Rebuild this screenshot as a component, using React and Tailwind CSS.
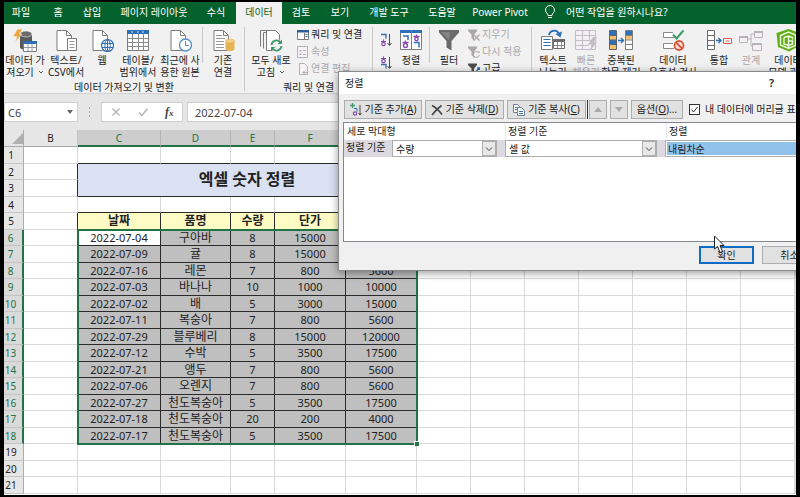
import { useState } from 'react'
import clsx from 'clsx'

const TABS = [
  { label: '파일', width: 'w-[34px]' },
  { label: '홈', width: 'w-[40px]' },
  { label: '삽입', width: 'w-[28px]' },
  { label: '페이지 레이아웃', width: 'w-[96px]' },
  { label: '수식', width: 'w-[28px]' },
  { label: '데이터', width: 'ml-[6px] w-[46px]' },
  { label: '검토', width: 'w-[38px]' },
  { label: '보기', width: 'w-[40px]' },
  { label: '개발 도구', width: 'w-[58px]' },
  { label: '도움말', width: 'w-[48px]' },
  { label: 'Power Pivot', width: 'w-[68px]' },
]

// 날짜, 품명, 수량, 단가, 금액
const ITEMS = [
  ['2022-07-04', '구아바', 8, 15000, 120000],
  ['2022-07-09', '귤', 8, 15000, 120000],
  ['2022-07-16', '레몬', 7, 800, 5600],
  ['2022-07-03', '바나나', 10, 1000, 10000],
  ['2022-07-02', '배', 5, 3000, 15000],
  ['2022-07-11', '복숭아', 7, 800, 5600],
  ['2022-07-29', '블루베리', 8, 15000, 120000],
  ['2022-07-12', '수박', 5, 3500, 17500],
  ['2022-07-21', '앵두', 7, 800, 5600],
  ['2022-07-06', '오렌지', 7, 800, 5600],
  ['2022-07-27', '천도복숭아', 5, 3500, 17500],
  ['2022-07-18', '천도복숭아', 20, 200, 4000],
  ['2022-07-17', '천도복숭아', 5, 3500, 17500],
]

const COLUMNS = ['B', 'C', 'D', 'E', 'F', 'G', 'H', 'I', 'J', 'K', 'L', 'M', 'N']
const SELECTED_COLUMNS = ['C', 'D', 'E', 'F', 'G']
const FIRST_ROW = 6

/* ---------- ribbon icons ---------- */

function Icon({ children, w = 24, h = 24, className }) {
  return (
    <svg width={w} height={h} viewBox={`0 0 ${w} ${h}`} fill="none" className={clsx('shrink-0', className)} aria-hidden="true">
      {children}
    </svg>
  )
}

function Page({ x = 3 }) {
  return (
    <>
      <path d={`M${x} 2.5h9.500l5 5v15h-14.500z`} fill="#fff" stroke="#7d7d7d" />
      <path d={`M${x + 9.5} 2.500v5h5`} stroke="#7d7d7d" />
    </>
  )
}

function GetDataIcon() {
  return (
    <Icon>
      <path d="M7 7v12c0 2 3 3 6 3s6-1 6-3V7z" fill="#595959" />
      <ellipse cx="13" cy="6" rx="6" ry="3" fill="#6b6b6b" stroke="#f1f1f1" strokeWidth=".6" />
      <path d="M4.500 1h5L6.500 6H9L2 14.500 4 8.500H0z" fill="#eda33b" stroke="#f1f1f1" strokeWidth=".6" />
      <path d="M10.500 13.500h13v10h-13z" fill="#fff" stroke="#7d7d7d" />
      <path d="M10 13h14v3H10z" fill="#2f6fb5" />
      <path d="M11 19.500h12M15 16v7M19 16v7" stroke="#9a9a9a" />
    </Icon>
  )
}

function TextFileIcon() {
  return (
    <Icon>
      <Page />
      <path d="M13.500 10.500h9v12h-9z" fill="#fff" stroke="#7d7d7d" />
      <path d="M15.500 13.500h5M15.500 16.500h5M15.500 19.500h5" stroke="#9a9a9a" />
    </Icon>
  )
}

function WebIcon() {
  return (
    <Icon>
      <Page />
      <circle cx="17.500" cy="17.500" r="6" fill="#fff" stroke="#2f6fb5" strokeWidth="1.200" />
      <ellipse cx="17.500" cy="17.500" rx="2.600" ry="6" stroke="#2f6fb5" />
      <path d="M12 15.500h11M12 19.500h11M17.500 12v11" stroke="#2f6fb5" />
    </Icon>
  )
}

function TableIcon() {
  return (
    <Icon>
      <path d="M1.500 2.500h21v20h-21z" fill="#fff" stroke="#7d7d7d" />
      <path d="M1 2h22v4H1z" fill="#2f6fb5" />
      <path d="M2 10.500h20M2 14.500h20M2 18.500h20M6.500 6v16M12.500 6v16M17.500 6v16" stroke="#8a8a8a" />
      <path d="M6 3v2M12 3v2M17 3v2" stroke="#d8e6f4" />
    </Icon>
  )
}

function RecentIcon() {
  return (
    <Icon>
      <Page />
      <circle cx="17.500" cy="17" r="6" fill="#fff" stroke="#5a8fc4" strokeWidth="1.300" />
      <path d="M17.500 13v4.500H21" stroke="#5a8fc4" />
    </Icon>
  )
}

function ConnectionIcon() {
  return (
    <Icon>
      <Page />
      <path d="M5 7.500h6M5 10.500h9M5 13.500h8M5 16.500h8M5 19.500h8" stroke="#9a9a9a" />
      <path d="M14.500 13v8c0 1.500 2 2 4.500 2s4.500-.5 4.500-2v-8z" fill="#e6b455" />
      <ellipse cx="19" cy="13" rx="4.500" ry="1.900" fill="#f3d08b" stroke="#e6b455" strokeWidth=".6" />
    </Icon>
  )
}

function RefreshIcon() {
  return (
    <Icon>
      <path d="M1.500 18.500v-16h7M4.500 20.500v-16h4" stroke="#7d7d7d" />
      <path d="M7.500 2.500h9l4 4v16h-13z" fill="#fff" stroke="#7d7d7d" />
      <circle cx="17.500" cy="17.500" r="6.500" fill="#f1f1f1" />
      <path d="M12.500 17a5 5 0 0 1 9-2.500M22.500 18a5 5 0 0 1-9 2.500" stroke="#3f9c6b" strokeWidth="1.800" />
      <path d="M23 11.500v4.500h-4.500zM12 23.500V19h4.500z" fill="#3f9c6b" />
    </Icon>
  )
}

function QueryPaneIcon() {
  return (
    <Icon w={12} h={12}>
      <path d="M.5 1.500h11v9H.5z" fill="#fff" stroke="#7d7d7d" />
      <path d="M0 1h12v2.500H0z" fill="#2f5f96" />
      <path d="M7.500 4v6" stroke="#7d7d7d" />
      <path d="M8.500 5.500h2M8.500 7.500h2" stroke="#2f6fb5" />
    </Icon>
  )
}

function PropertiesIcon() {
  return (
    <Icon w={12} h={12}>
      <path d="M.5.500h10v11H.5z" fill="#f6f2f6" stroke="#b5b0b5" />
      <path d="M2.500 4h2v1.500h-2zM2.500 7.500h2V9h-2z" fill="#b5a8b8" />
      <path d="M6 4.500h3M6 8.500h3" stroke="#b5a8b8" />
    </Icon>
  )
}

function EditLinksIcon() {
  return (
    <Icon w={12} h={12}>
      <path d="M2.500.500h5l3 3v8h-8z" fill="#f6f2f6" stroke="#b5b0b5" />
      <path d="M6 9.500h5M8 7.500l-2 2 2 2" stroke="#b5a8b8" />
    </Icon>
  )
}

function SortOrderIcon({ descending }) {
  return (
    <Icon w={12} h={14}>
      {descending ? (
        <>
          <circle cx="3.500" cy="5" r="1.700" stroke="#8a4bb0" strokeWidth="1.200" />
          <path d="M1 2.500h5M3.500.5v2" stroke="#8a4bb0" strokeWidth="1.200" />
          <path d="M1 8.500h5v4" stroke="#2f6fb5" strokeWidth="1.300" />
        </>
      ) : (
        <>
          <path d="M1 1.500h5v4" stroke="#2f6fb5" strokeWidth="1.300" />
          <circle cx="3.500" cy="11" r="1.700" stroke="#8a4bb0" strokeWidth="1.200" />
          <path d="M1 8.500h5M3.500 6.500v2" stroke="#8a4bb0" strokeWidth="1.200" />
        </>
      )}
      <path d="M9.500 1v11M7.500 10l2 2.500 2-2.500" stroke="#4a4a4a" />
    </Icon>
  )
}

function SortIcon() {
  return (
    <Icon>
      <path d="M1.500 2.500h21v19h-21z" fill="#fff" stroke="#7d7d7d" />
      <path d="M1 2h22v3H1z" fill="#2f6fb5" />
      <path d="M12.500 2v19" stroke="#7d7d7d" />
      <path d="M4 8h5v4M15 14.500h5v5" stroke="#2f6fb5" strokeWidth="1.500" />
      <circle cx="6.500" cy="17.500" r="2" stroke="#8a4bb0" strokeWidth="1.400" />
      <path d="M3.500 14.500h6M6.500 12.500v2" stroke="#8a4bb0" strokeWidth="1.300" />
      <circle cx="17.500" cy="11" r="1.700" stroke="#8a4bb0" strokeWidth="1.400" />
      <path d="M14.500 8.500h6M17.500 6.500v2" stroke="#8a4bb0" strokeWidth="1.300" />
    </Icon>
  )
}

function FilterIcon() {
  return (
    <Icon>
      <path d="M2 2h20v2.500L14.500 13v9.500l-5-3V13L2 4.500z" fill="#6a6a6a" />
      <path d="M4 4h9l-1 8z" fill="#838383" />
    </Icon>
  )
}

function SmallFilterIcon({ kind }) {
  const active = kind === 'advanced'
  return (
    <Icon w={12} h={12}>
      <path d="M0 .5h9v1.500L6 5.500V11L3.500 9.500v-4L0 2z" fill={active ? '#4d4d4d' : '#aaa6aa'} />
      {kind === 'clear' && <path d="M5.500 5.500l6 6M11.500 5.500l-6 6" stroke="#aaa6aa" strokeWidth="1.300" />}
      {kind === 'reapply' && <path d="M5.500 8a3 3 0 0 1 5.500-1v-2M11.500 9a3 3 0 0 1-5.500 1v2" stroke="#aaa6aa" />}
      {active && <path d="M8 9l3-4M9 5h2.500v2" stroke="#2f6fb5" strokeWidth="1.300" />}
    </Icon>
  )
}

function TextToColumnsIcon() {
  return (
    <Icon>
      <path d="M8 7c1-5 8-6 10-1" stroke="#2f6fb5" strokeWidth="1.800" />
      <path d="M21 3.500l-1.500 6L14.500 6z" fill="#2f6fb5" />
      <path d="M.5 8.500h11v13H.5z" fill="#fff" stroke="#7d7d7d" />
      <path d="M2.500 11.500h7M2.500 14.500h7M2.500 17.500h7" stroke="#2f6fb5" />
      <path d="M12.500 11.500h11v9h-11z" fill="#fff" stroke="#6b6b6b" />
      <path d="M12 11h12v3H12z" fill="#6b6b6b" />
      <path d="M13 17.500h10M16.500 14v6M20.500 14v6" stroke="#8a8a8a" />
    </Icon>
  )
}

function FlashFillIcon() {
  return (
    <Icon>
      <path d="M1.500 2.500h20v19h-20z" fill="#f4eff5" stroke="#c3bdc5" />
      <path d="M1 7.500h21M1 12.500h21M1 17.500h14M8.500 3v18M15.500 3v10" stroke="#c3bdc5" />
      <path d="M19 9h4l-3 5h3l-7 9 1.500-6.500H14z" fill="#c3bdc5" />
    </Icon>
  )
}

function DuplicatesIcon() {
  return (
    <Icon>
      <path d="M.5 2.500h7v19h-7z" fill="#f0c06a" stroke="#5a6470" />
      <path d="M1 3h6v4H1zM1 12h6v4H1z" fill="#2f6fb5" />
      <path d="M1 7.500h6M1 12h6M1 16.500h6" stroke="#5a6470" />
      <path d="M16.500 2.500h7v19h-7z" fill="#fff" stroke="#7d7d7d" />
      <path d="M17 3h6v4h-6z" fill="#2f6fb5" />
      <path d="M17 7.500h6v4h-6z" fill="#f0c06a" />
      <path d="M17 7.500h6M17 12h6M17 16.500h6" stroke="#7d7d7d" />
      <path d="M9 12.500h5M12 10l2.500 2.500L12 15" stroke="#2f6fb5" strokeWidth="1.400" />
    </Icon>
  )
}

function ValidationIcon() {
  return (
    <Icon>
      <path d="M12 4.500H2.500v5H14M12 15.500H2.500v5H13" fill="#fff" stroke="#8a8a8a" />
      <path d="M12 6.500l3.500 4 7-8" stroke="#3f9c6b" strokeWidth="2" />
      <circle cx="18" cy="17.500" r="4.500" fill="#fbe3dc" stroke="#d9573a" strokeWidth="1.800" />
      <path d="M15 14.500l6 6" stroke="#d9573a" strokeWidth="1.800" />
    </Icon>
  )
}

function ConsolidateIcon() {
  return (
    <Icon w={26}>
      <path d="M1.500 2.500h7v19h-7z" fill="#fff" stroke="#6b6b6b" />
      <path d="M2 7.500h6M2 12.500h6M2 17.500h6" stroke="#6b6b6b" />
      <path d="M10 12.500h5M12.500 10l2.500 2.500-2.500 2.500" stroke="#2f6fb5" strokeWidth="1.400" />
      <path d="M17.500 10.500h8v5h-8z" fill="#fff" stroke="#d0604a" />
      <path d="M19.500 13h4" stroke="#d0604a" />
    </Icon>
  )
}

function RelationIcon() {
  return (
    <Icon>
      <path d="M9 11h3V6h3M12 11v7h2" stroke="#b8b3b8" />
      <path d="M.5 8.500h8v6h-8zM15.500 3.500h8v6h-8zM13.500 15.500h9v7h-9z" fill="#f4f0f4" stroke="#b8b3b8" />
      <path d="M0 8h9v2H0zM15 3h9v2h-9zM13 15h10v2H13z" fill="#b8b3b8" />
    </Icon>
  )
}

function DataModelIcon() {
  return (
    <Icon>
      <path d="M12.500 1L22 4.500 23 6v12l-10 5.500L2 19 .5 5z" fill="#5fae14" />
      <path d="M4.500 7.500l8-3.500 7 3v10.500l-7 3-8-3.500z" stroke="#eef8e2" strokeWidth="1.500" />
      <path d="M12.500 8v12M8 9.500l4.500-1.500 4 1.500v2M8 9.500v6.500l4.500 1.500 4-1.500v-3h-4" stroke="#eef8e2" strokeWidth="1.400" />
    </Icon>
  )
}

/* ---------- ribbon ---------- */

function BigButton({ icon, lines, width, disabled, arrow }) {
  return (
    <button type="button" disabled={disabled} className={clsx('flex shrink-0 flex-col items-center pt-1', width, disabled && 'text-[#aaa6aa]')}>
      {icon}
      {lines.map((line, i) => (
        <span key={line} className={clsx('flex items-center gap-1 leading-3 whitespace-nowrap', i === 0 && 'mt-[2px]')}>
          {line}
          {arrow && i === lines.length - 1 && <Chevron />}
        </span>
      ))}
    </button>
  )
}

function Chevron() {
  return (
    <Icon w={6} h={6}>
      <path d="M1 2l2 2 2-2" stroke="#555" />
    </Icon>
  )
}

function SmallButton({ icon, label, disabled }) {
  return (
    <button type="button" disabled={disabled} className={clsx('flex h-[17px] items-center gap-[2px] whitespace-nowrap', disabled && 'text-[#aaa6aa]')}>
      {icon}
      {label}
    </button>
  )
}

function Group({ title, className, children }) {
  return (
    <section aria-label={title} className={clsx('flex shrink-0 flex-col', className)}>
      <div className="flex h-[57px]">{children}</div>
      <div className="text-center leading-3">{title}</div>
    </section>
  )
}

function Divider({ short }) {
  return <div className={clsx('mt-[3px] w-px shrink-0 bg-[#c9c9c9]', short ? 'h-[36px]' : 'h-[64px]')} />
}

function Ribbon() {
  return (
    <div className="flex h-[70px] overflow-hidden border-b border-[#d2d2d2] bg-[#f1f1f1]">
      <Group title="데이터 가져오기 및 변환" className="w-[240px]">
        <BigButton icon={<GetDataIcon />} lines={['데이터 가', '져오기']} width="w-[42px]" arrow />
        <BigButton icon={<TextFileIcon />} lines={['텍스트/', 'CSV에서']} width="w-[40px]" />
        <BigButton icon={<WebIcon />} lines={['웹']} width="w-[32px]" />
        <BigButton icon={<TableIcon />} lines={['테이블/', '범위에서']} width="w-[40px]" />
        <BigButton icon={<RecentIcon />} lines={['최근에 사', '용한 원본']} width="w-[44px]" />
        <Divider short />
        <BigButton icon={<ConnectionIcon />} lines={['기존', '연결']} width="w-[40px]" />
      </Group>
      <Divider />
      <Group title="쿼리 및 연결" className="w-[127px]">
        <BigButton icon={<RefreshIcon />} lines={['모두 새로', '고침']} width="w-[52px]" arrow />
        <div className="flex flex-col pt-[2px]">
          <SmallButton icon={<QueryPaneIcon />} label="쿼리 및 연결" />
          <SmallButton icon={<PropertiesIcon />} label="속성" disabled />
          <SmallButton icon={<EditLinksIcon />} label="연결 편집" disabled />
        </div>
      </Group>
      <Divider />
      <Group title="정렬 및 필터" className="w-[158px]">
        <div className="flex w-[26px] flex-col items-center gap-[9px] pt-[9px]">
          <button type="button" aria-label="오름차순"><SortOrderIcon /></button>
          <button type="button" aria-label="내림차순"><SortOrderIcon descending /></button>
        </div>
        <BigButton icon={<SortIcon />} lines={['정렬']} width="w-[24px]" />
        <div className="w-[6px]" />
        <Divider short />
        <BigButton icon={<FilterIcon />} lines={['필터']} width="w-[38px]" />
        <div className="flex flex-col pt-[2px]">
          <SmallButton icon={<SmallFilterIcon kind="clear" />} label="지우기" disabled />
          <SmallButton icon={<SmallFilterIcon kind="reapply" />} label="다시 적용" disabled />
          <SmallButton icon={<SmallFilterIcon kind="advanced" />} label="고급" />
        </div>
      </Group>
      <Divider />
      <Group title="데이터 도구" className="w-[280px]">
        <BigButton icon={<TextToColumnsIcon />} lines={['텍스트', '나누기']} width="w-[42px]" />
        <BigButton icon={<FlashFillIcon />} lines={['빠른', '채우기']} width="w-[24px]" disabled />
        <BigButton icon={<DuplicatesIcon />} lines={['중복된', '항목 제거']} width="w-[46px]" />
        <BigButton icon={<ValidationIcon />} lines={['데이터', '유효성 검사']} width="w-[58px]" />
        <BigButton icon={<ConsolidateIcon />} lines={['통합']} width="w-[34px]" />
        <BigButton icon={<RelationIcon />} lines={['관계']} width="w-[30px]" disabled />
        <BigButton icon={<DataModelIcon />} lines={['데이터', '모델 관리']} width="w-[44px]" />
      </Group>
    </div>
  )
}

function TabBar() {
  const [active, setActive] = useState('데이터')

  return (
    <nav className="flex h-[22px] items-stretch overflow-hidden bg-[#05622c] text-white">
      {TABS.map((tab) => (
        <button
          key={tab.label}
          type="button"
          onClick={() => setActive(tab.label)}
          className={clsx('shrink-0 pb-[2px] whitespace-nowrap', tab.width, tab.label === active && 'bg-[#f1f1f1] text-[#05622c]')}
        >
          {tab.label}
        </button>
      ))}
      <button type="button" className="ml-[10px] flex items-center gap-[10px] pb-[2px] whitespace-nowrap">
        <Icon w={12} h={14}>
          <path d="M4 10.500C4 8.500 1.500 7.500 1.500 5a4.500 4.500 0 0 1 9 0c0 2.500-2.500 3.500-2.500 5.500zM4 12.500h4" stroke="#fff" />
        </Icon>
        어떤 작업을 원하시나요?
      </button>
    </nav>
  )
}

function FormulaBar() {
  return (
    <div className="flex h-[36px] items-center bg-[#e6e6e6] text-[11px] text-[#444]">
      <div className="relative flex w-[74px] shrink-0">
        <input aria-label="이름 상자" defaultValue="C6" className="h-5 w-full border border-[#cfcfcf] bg-white pl-[3px]" />
        <Icon w={6} h={4} className="absolute top-2 right-[5px]">
          <path d="M0 0h6L3 4z" fill="#666" />
        </Icon>
      </div>
      <Icon w={3} h={10} className="mx-[10px]">
        <path d="M1 0h1v2H1zM1 4h1v2H1zM1 8h1v2H1z" fill="#aaa" />
      </Icon>
      <div className="flex h-5 w-[82px] shrink-0 items-center justify-around border border-[#cfcfcf] bg-white">
        <button type="button" aria-label="취소">
          <Icon w={10} h={10}><path d="M1.500 1.500l7 7M8.500 1.500l-7 7" stroke="#b0b0b0" strokeWidth="1.200" /></Icon>
        </button>
        <button type="button" aria-label="입력">
          <Icon w={10} h={10}><path d="M1 5.500l3 3 5.500-7" stroke="#b0b0b0" strokeWidth="1.400" /></Icon>
        </button>
        <button type="button" className="font-['Liberation_Serif',serif] text-[12px] leading-4 font-bold italic">
          f<span className="text-[9px]">x</span>
        </button>
      </div>
      <input aria-label="수식" defaultValue="2022-07-04" className="ml-1 h-5 min-w-0 flex-1 border border-[#cfcfcf] bg-white pl-[7px]" />
    </div>
  )
}

/* ---------- sheet ---------- */

const LINE = 'border-[#d9d9d9]'
const DARK = 'border-[#2b2b2b]'

function BlankCells({ count, from = 0, className }) {
  return Array.from({ length: count }, (_, i) => (
    <td key={from + i} className={clsx('border-r border-b', className || LINE)} />
  ))
}

function SheetRow({ number }) {
  const item = ITEMS[number - FIRST_ROW]
  const boxed = number === 2 || number === 3 || number === 5
  // rows 1 and 4 sit right above a boxed range
  const aboveBox = number === 1 || number === 4

  return (
    <tr className={number % 2 ? 'h-[17px]' : 'h-[16px]'}>
      <th
        scope="row"
        className={clsx(
          'border-b border-b-[#c4c4c4] pr-[5px] text-center text-[10px] font-normal',
          item ? 'border-r-2 border-r-[#217346] bg-[#dadada] text-[#217346]' : 'border-r border-r-[#ababab] bg-[#e6e6e6] text-[#222]',
        )}
      >
        {number}
      </th>
      <td className={clsx('border-r border-b border-b-[#d9d9d9]', boxed ? 'border-r-[#2b2b2b]' : 'border-r-[#d9d9d9]')} />

      {number === 2 && (
        <td colSpan={5} rowSpan={2} className={clsx('border-r border-b bg-[#d9e1f2] pb-[2px] text-center text-[16px] leading-5 font-bold', DARK)}>
          엑셀 숫자 정렬
        </td>
      )}
      {number === 5 &&
        ['날짜', '품명', '수량', '단가', '금액'].map((label) => (
          <td key={label} className={clsx('border-r border-b bg-[#fffbc4] text-center text-[12px] font-bold', DARK)}>
            {label}
          </td>
        ))}
      {item &&
        item.map((value, i) => (
          <td
            key={i}
            className={clsx(
              'border-r border-b text-center',
              DARK,
              i === 1 ? 'text-[12px]' : 'text-[11px]',
              number === FIRST_ROW && i === 0 ? 'bg-white' : 'bg-[#bfbfbf]',
            )}
          >
            {value}
          </td>
        ))}
      {!item && !boxed && (
        <BlankCells count={5} className={aboveBox && 'border-r-[#d9d9d9] border-b-[#2b2b2b]'} />
      )}
      <BlankCells count={8} from={10} />
    </tr>
  )
}

function Sheet() {
  return (
    <div className="relative flex-1 overflow-hidden bg-white">
      <table className="w-full table-fixed border-separate border-spacing-0 leading-[14px] text-[#222]">
        <colgroup>
          <col className="w-[20px]" />
          <col className="w-[54px]" />
          <col className="w-[83px]" />
          <col className="w-[70px]" />
          <col className="w-[44px]" />
          <col className="w-[71px]" />
          <col className="w-[71px]" />
          {Array.from({ length: 7 }, (_, i) => (
            <col key={i} className="w-[54px]" />
          ))}
          <col />
        </colgroup>
        <thead>
          <tr className="h-[17px]">
            <th className="border-r border-b border-[#ababab] bg-[#e6e6e6]">
              <Icon w={11} h={11} className="ml-auto">
                <path d="M11 0v11H0z" fill="#b0b0b0" />
              </Icon>
            </th>
            {COLUMNS.map((letter) => (
              <th
                key={letter}
                scope="col"
                className={clsx(
                  'overflow-hidden border-r text-[10px] font-normal',
                  SELECTED_COLUMNS.includes(letter)
                    ? 'border-b-2 border-r-[#b4b4b4] border-b-[#217346] bg-[#cdcdcd] text-[#217346]'
                    : 'border-b border-r-[#c4c4c4] border-b-[#ababab] bg-[#e6e6e6]',
                )}
              >
                {letter}
              </th>
            ))}
            <th className="border-b border-[#ababab] bg-[#e6e6e6]" />
          </tr>
        </thead>
        <tbody>
          {Array.from({ length: 21 }, (_, i) => (
            <SheetRow key={i} number={i + 1} />
          ))}
        </tbody>
      </table>

      {/* selection frame over C6:G18 */}
      <div className="pointer-events-none absolute top-[99px] left-[73px] h-[216px] w-[341px] border-2 border-[#217346]">
        <span className="absolute -right-[3px] -bottom-[3px] size-[5px] border-t border-l border-white bg-[#217346]" />
      </div>
    </div>
  )
}

/* ---------- sort dialog ---------- */

function ToolButton({ icon, label, hotkey, suffix, width, disabled }) {
  return (
    <button
      type="button"
      disabled={disabled}
      aria-label={label}
      className={clsx('flex h-[19px] shrink-0 items-center justify-center gap-[3px] border border-[#adadad] bg-[#e1e1e1] whitespace-nowrap', width)}
    >
      {icon}
      {hotkey && (
        <span>
          {label}(<u>{hotkey}</u>){suffix}
        </span>
      )}
    </button>
  )
}

function ComboBox({ label, options, width }) {
  return (
    <div className={clsx('relative h-[17px] shrink-0 border border-[#adadad] bg-white', width)}>
      <select aria-label={label} className="block h-full w-full appearance-none pr-4 pl-[3px] leading-[14px]">
        {options.map((option) => (
          <option key={option}>{option}</option>
        ))}
      </select>
      <span className="pointer-events-none absolute inset-y-0 right-0 flex w-[14px] items-center justify-center border border-[#adadad] bg-[#e8e8e8]">
        <Icon w={8} h={8}>
          <path d="M1 2.500l3 3 3-3" stroke="#444" />
        </Icon>
      </span>
    </div>
  )
}

function SortDialog() {
  const [hasHeader, setHasHeader] = useState(true)

  return (
    <div
      role="dialog"
      aria-label="정렬"
      className="absolute top-[69px] left-[334px] flex h-[200px] w-[500px] flex-col border border-[#8a8a8a] bg-[#f0f0f0] shadow-[0_2px_8px_rgba(0,0,0,0.4)]"
    >
      <div className="flex h-[22px] shrink-0 items-center bg-white pl-[6px]">
        <h2 className="w-[424px]">정렬</h2>
        <button type="button" aria-label="도움말" className="text-[11px] font-semibold">?</button>
      </div>

      <div className="mt-[6px] flex shrink-0 items-center gap-[3px] pl-[5px]">
        <ToolButton
          width="w-[78px]"
          label="기준 추가"
          hotkey="A"
          icon={
            <Icon w={12} h={13}>
              <path d="M2.500 0v5M0 2.500h5" stroke="#3f9c6b" strokeWidth="1.400" />
              <path d="M4 5.500h3v3" stroke="#2f6fb5" />
              <circle cx="5" cy="10.500" r="1.700" stroke="#8a4bb0" strokeWidth="1.200" />
              <path d="M10 2v10M8.500 10l1.500 2 1.500-2" stroke="#4a4a4a" />
            </Icon>
          }
        />
        <ToolButton
          width="w-[79px]"
          label="기준 삭제"
          hotkey="D"
          icon={<Icon w={12} h={12}><path d="M1 1.500c4 2 7 5 10 9M10.500 1.500C7 4 4 7 1 11" stroke="#444" strokeWidth="1.600" /></Icon>}
        />
        <ToolButton
          width="w-[79px]"
          label="기준 복사"
          hotkey="C"
          icon={
            <Icon w={12} h={12}>
              <path d="M.5.500h4l2 2v6h-6z" fill="#fff" stroke="#6b7f96" />
              <path d="M4.500 3.500h4l3 3v5h-7z" fill="#fff" stroke="#6b7f96" />
              <path d="M6 7.500h4M6 9.500h4M2 3.500h2M2 5.500h2" stroke="#2f6fb5" />
            </Icon>
          }
        />
        <div className="-mx-[2px] h-[19px] w-px bg-[#333]" />
        <ToolButton width="w-[18px]" label="위로 이동" disabled icon={<Icon w={8} h={5}><path d="M4 0l4 5H0z" fill="#aaa" /></Icon>} />
        <ToolButton width="w-[18px]" label="아래로 이동" disabled icon={<Icon w={8} h={5}><path d="M4 5l4-5H0z" fill="#aaa" /></Icon>} />
        <ToolButton width="w-[52px]" label="옵션" hotkey="O" suffix="..." />
        <label className="ml-[3px] flex items-center gap-[5px] whitespace-nowrap">
          <span className="relative flex">
            <input
              type="checkbox"
              checked={hasHeader}
              onChange={(e) => setHasHeader(e.target.checked)}
              className="size-[11px] appearance-none border border-[#333] bg-white"
            />
            {hasHeader && (
              <Icon w={11} h={11} className="pointer-events-none absolute inset-0">
                <path d="M2.500 5.500l2 2.500 4-5" stroke="#333" />
              </Icon>
            )}
          </span>
          내 데이터에 머리글 표시
        </label>
      </div>

      <div className="mt-[3px] ml-1 flex h-[120px] shrink-0 flex-col border border-[#828790] bg-white">
        <div className="flex h-[17px] shrink-0 items-center">
          <div className="w-[161px] pl-[3px]">세로 막대형</div>
          <div className="w-[161px] border-l border-[#e5e5e5] pl-[2px]">정렬 기준</div>
          <div className="flex-1 border-l border-[#e5e5e5] pl-[2px]">정렬</div>
        </div>
        <div className="flex h-[17px] shrink-0 bg-[#dcd9e1]">
          <div className="w-[48px] pl-[2px] leading-[14px]">정렬 기준</div>
          <ComboBox label="세로 막대형" options={['수량', '날짜', '품명', '단가', '금액']} width="w-[105px]" />
          <div className="w-2" />
          <ComboBox label="정렬 기준" options={['셀 값', '셀 색', '글꼴 색']} width="w-[152px]" />
          <div className="w-2" />
          <div className="flex-1 border border-[#adadad] bg-white p-px">
            <select aria-label="정렬" className="block h-full w-full appearance-none bg-[#8fc3ec] pl-px leading-[12px]">
              <option>내림차순</option>
              <option>오름차순</option>
            </select>
          </div>
        </div>
      </div>

      <div className="flex flex-1 items-center gap-2 pb-[2px] pl-[360px]">
        <button type="button" className="h-[18px] w-[55px] border-2 border-[#0f6cc4] bg-[#e1e1e1] leading-3">확인</button>
        <button type="button" className="h-[18px] w-[55px] border border-[#adadad] bg-[#e1e1e1] leading-3">취소</button>
      </div>
    </div>
  )
}

function Cursor() {
  return (
    <Icon w={12} h={19} className="pointer-events-none absolute top-[233px] left-[710px]">
      <path d="M.5 1v13l3-2.500 2.500 6 2.500-1-2.500-6h4z" fill="#fff" stroke="#222" />
    </Icon>
  )
}

export default function App() {
  return (
    <div className="h-screen bg-black px-1 py-[2px] font-['Noto_Sans','Noto_Sans_CJK_KR',sans-serif] text-[10px] text-[#222]">
      <div className="relative flex h-full flex-col overflow-hidden">
        <TabBar />
        <Ribbon />
        <FormulaBar />
        <Sheet />
        <SortDialog />
        <Cursor />
      </div>
    </div>
  )
}
